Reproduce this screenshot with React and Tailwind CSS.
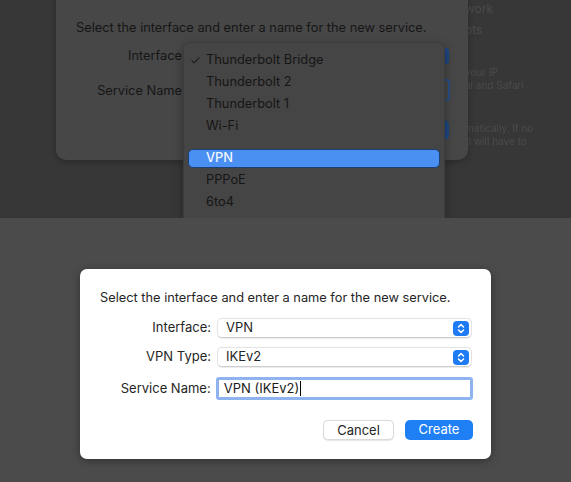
import { Check } from "lucide-react";

const menuItems = ["Thunderbolt Bridge", "Thunderbolt 2", "Thunderbolt 1", "Wi-Fi"];
const menuItems2 = ["PPPoE", "6to4"];
const faintLines = [
    { text: "work", cls: "mt-[2px]" },
    { text: "ots", cls: "mt-[8px]" },
    { text: "your IP", cls: "mt-[30px] text-[10px]" },
    { text: "al and Safari", cls: "text-[10px]" },
    { text: "matically. If no", cls: "mt-[30px] text-[10px]" },
    { text: "d will have to", cls: "text-[10px]" },
];

const Stepper = ({ dim }) => (
    <div className={`flex h-[15px] w-[16px] items-center justify-center rounded-[4px] ${dim ? "bg-[#1d467f]" : "bg-[#1f7bf4]"}`}>
        <svg width="8" height="11" viewBox="0 0 8 11" fill="none" stroke="white" strokeWidth="1.5" strokeLinecap="round" strokeLinejoin="round">
            <path d="M1.5 4 L4 1.5 L6.5 4" />
            <path d="M1.5 7 L4 9.5 L6.5 7" />
        </svg>
    </div>
);

const PopUp = ({ value }) => (
    <div className="flex h-[20px] w-[255px] items-center justify-between rounded-[5px] border border-[#e4e4e4] border-b-[#cdcdcd] bg-white pl-[8px] pr-[2px] shadow-[0_0.5px_1px_rgba(0,0,0,0.08)]">
        <span className="text-[13px] text-[#262626]">{value}</span>
        <Stepper />
    </div>
);

export default function App() {
    return (
        <div className="flex h-[482px] w-[571px] flex-col overflow-hidden font-['Inter',sans-serif]">
            {/* Top screenshot: dimmed sheet with open popup menu */}
            <div className="relative h-[218px] shrink-0 overflow-hidden bg-[#373737]">
                <div className="flex">
                    <div className="relative z-10 ml-[56px] mt-[-10px] h-[170px] w-[412px] shrink-0 rounded-[10px] bg-[#474747] pl-[20px] pt-[30px] shadow-[0_2px_6px_rgba(0,0,0,0.25)]">
                        <p className="text-[12.8px] leading-[16px] text-[#161616]">
                            Select the interface and enter a name for the new service.
                        </p>
                        <div className="mt-[10px] flex items-center">
                            <span className="w-[106px] text-right text-[12.8px] text-[#161616]">Interface</span>
                            <div className="ml-auto mr-[19px] h-[16px] w-[4px] rounded-r-[3px] bg-[#1d467f]" />
                        </div>
                        <div className="mt-[14px] flex items-center">
                            <span className="w-[106px] text-right text-[12.8px] text-[#161616]">Service Name</span>
                            <div className="ml-auto mr-[18px] h-[22px] w-[5px] rounded-r-[3px] border-2 border-l-0 border-[#2a4e86]" />
                        </div>
                        <div className="mt-[19px] flex">
                            <div className="ml-auto mr-[19px] h-[20px] w-[6px] rounded-r-[5px] bg-[#1d467f]" />
                        </div>
                    </div>
                    <div className="-ml-[3px] flex flex-col text-[12px] leading-[13px] text-[#4b4b4b] blur-[0.4px]">
                        {faintLines.map((l) => (
                            <span key={l.text} className={l.cls}>{l.text}</span>
                        ))}
                    </div>
                </div>

                {/* Popup menu */}
                <div className="absolute left-[183px] top-[42px] z-20 h-[190px] w-[262px] rounded-[6px] border border-[#3c3c3c] bg-[#454545] pt-[6px] shadow-[0_4px_12px_rgba(0,0,0,0.3)]">
                    {menuItems.map((item, i) => (
                        <div key={item} className="relative flex h-[22px] items-center pl-[22px] text-[12.8px] text-[#151515]">
                            {i === 0 && <Check className="absolute left-[6px] text-[#151515]" size={11} strokeWidth={2.2} />}
                            {item}
                        </div>
                    ))}
                    <div className="h-[10px]" />
                    <div className="flex h-[22px] items-center px-[4px]">
                        <div className="flex h-[19px] w-full items-center rounded-[5px] border border-[#1c3f78] bg-[#4a8ff2] pl-[17px] text-[12.8px] font-medium text-[#f2f6ff]">
                            VPN
                        </div>
                    </div>
                    {menuItems2.map((item) => (
                        <div key={item} className="flex h-[22px] items-center pl-[22px] text-[12.8px] text-[#151515]">
                            {item}
                        </div>
                    ))}
                </div>
            </div>

            {/* Bottom screenshot: the filled-in sheet */}
            <div className="flex-1 bg-[#4b4b4b]">
                <div className="ml-[80px] mt-[51px] h-[190px] w-[411px] rounded-[7px] bg-white pl-[20px] pr-[18px] pt-[21px] shadow-[0_2px_8px_rgba(0,0,0,0.35)]">
                    <p className="text-[12.8px] leading-[16px] text-[#262626]">
                        Select the interface and enter a name for the new service.
                    </p>
                    <div className="mt-[12px] flex items-center">
                        <span className="w-[111px] text-right text-[13px] text-[#262626]">Interface:</span>
                        <div className="ml-[6px]"><PopUp value="VPN" /></div>
                    </div>
                    <div className="mt-[9px] flex items-center">
                        <span className="w-[111px] text-right text-[13px] text-[#262626]">VPN Type:</span>
                        <div className="ml-[6px]"><PopUp value="IKEv2" /></div>
                    </div>
                    <div className="mt-[10px] flex items-center">
                        <span className="w-[111px] text-right text-[13px] text-[#262626]">Service Name:</span>
                        <div className="ml-[5px] flex h-[23px] w-[258px] items-center rounded-[3px] border-[3px] border-[#8fb3ef] bg-white pl-[5px] text-[13px] text-[#1a1a1a]">
                            VPN (IKEv2)<span className="ml-[1px] h-[15px] w-px bg-black" />
                        </div>
                    </div>
                    <div className="mt-[20px] flex justify-end gap-[11px]">
                        <button className="h-[20px] w-[71px] rounded-[5px] border border-[#dadada] bg-white text-[13px] text-[#262626] shadow-[0_0.5px_1px_rgba(0,0,0,0.1)]">
                            Cancel
                        </button>
                        <button className="h-[20px] w-[68px] rounded-[5px] bg-[#1f7ff5] text-[13px] text-white">
                            Create
                        </button>
                    </div>
                </div>
            </div>
        </div>
    );
}
